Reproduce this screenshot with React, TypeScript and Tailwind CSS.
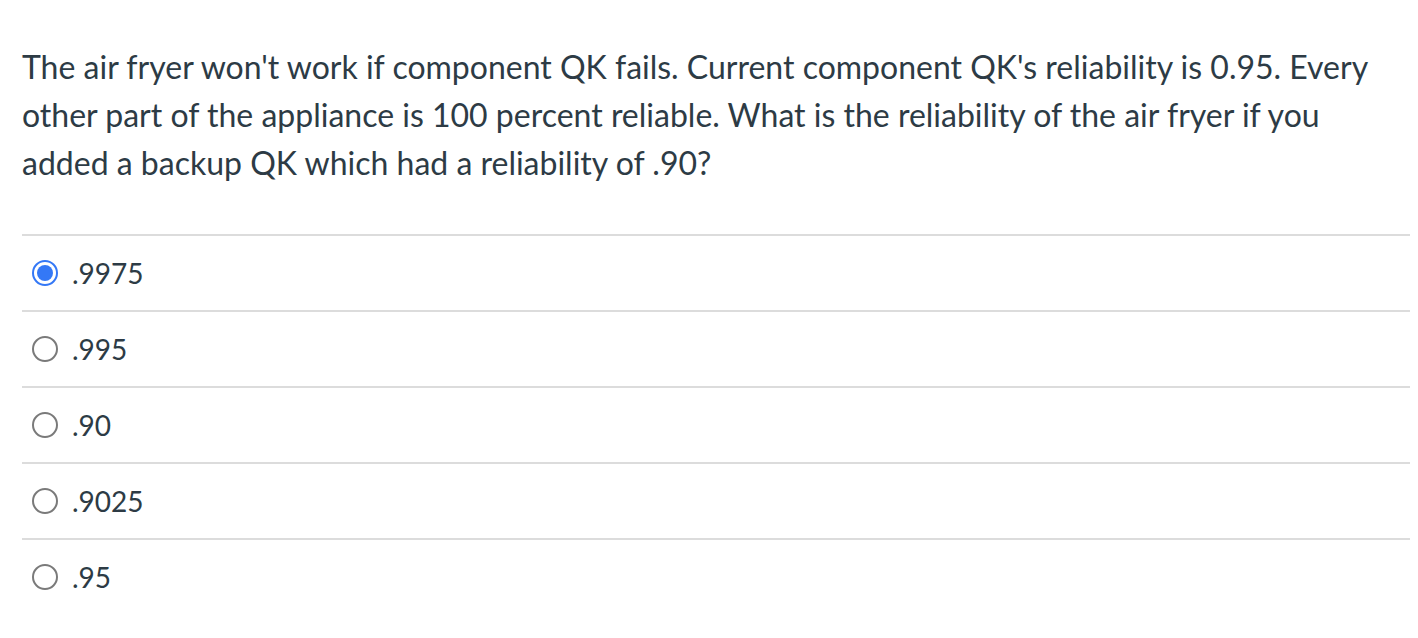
const options = ['.9975', '.995', '.90', '.9025', '.95']

function Radio({ checked }: { checked: boolean }) {
  if (checked) {
    return (
      <span className="flex h-[26px] w-[26px] shrink-0 items-center justify-center rounded-full border-2 border-[#3478f6] bg-white">
        <span className="h-[16px] w-[16px] rounded-full bg-[#3478f6]" />
      </span>
    )
  }
  return <span className="h-[26px] w-[26px] shrink-0 rounded-full border-2 border-[#7a7a7a] bg-white" />
}

export default function App() {
  return (
    <div className="min-h-[638px] bg-white pl-[22px] pr-[8px] pt-[43px] text-[#2d3b45] [font-family:Lato,'Open_Sans',sans-serif]">
      <p className="text-[32px] leading-[48px]">
        The air fryer won't work if component QK fails. Current component QK's reliability is 0.95. Every other part of the appliance is 100 percent reliable. What is the reliability of the air fryer if you added a backup QK which had a reliability of .90?
      </p>

      <div className="mt-[47px]">
        {options.map((opt, i) => (
          <div
            key={opt}
            className="flex h-[76px] items-center gap-[14px] border-t-2 border-[#dcdcdc] pl-[10px]"
          >
            <Radio checked={i === 0} />
            <span className="text-[28px]">{opt}</span>
          </div>
        ))}
      </div>
    </div>
  )
}
